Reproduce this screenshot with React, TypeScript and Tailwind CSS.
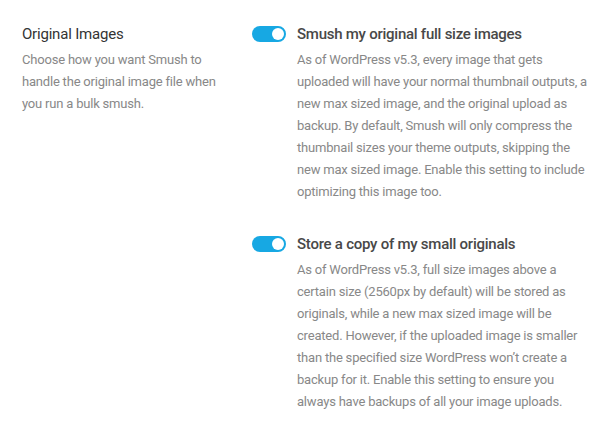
import React from "react";

function Toggle() {
  return (
    <div className="relative h-[16px] w-[34px] shrink-0 rounded-full bg-[#17a8e3]">
      <div className="absolute right-[2px] top-[2px] h-[12px] w-[12px] rounded-full bg-white" />
    </div>
  );
}

function Option({ title, desc }: { title: string; desc: string }) {
  return (
    <div className="flex flex-col">
      <div className="flex items-center gap-[11px]">
        <Toggle />
        <div className="text-[15px] leading-[22px] font-medium tracking-[-0.25px] text-[#484848]">{title}</div>
      </div>
      <p className="mt-[4px] ml-[45px] w-[293px] text-[13px] leading-[22px] tracking-[-0.2px] text-[#888888]">{desc}</p>
    </div>
  );
}

export default function App() {
  return (
    <div
      className="h-[429px] w-[610px] bg-white pl-[22px] pt-[23px]"
      style={{ fontFamily: "Roboto, 'Noto Sans', sans-serif" }}
    >
      <div className="flex">
        <div className="w-[230px] shrink-0">
          <div className="text-[15px] leading-[22px] tracking-[-0.2px] text-[#333333]">Original Images</div>
          <p className="mt-[4px] w-[200px] text-[13px] leading-[22px] tracking-[-0.2px] text-[#888888]">
            Choose how you want Smush to handle the original image file when you run a bulk smush.
          </p>
        </div>
        <div className="flex flex-col gap-[30px]">
          <Option
            title="Smush my original full size images"
            desc="As of WordPress v5.3, every image that gets uploaded will have your normal thumbnail outputs, a new max sized image, and the original upload as backup. By default, Smush will only compress the thumbnail sizes your theme outputs, skipping the new max sized image. Enable this setting to include optimizing this image too."
          />
          <Option
            title="Store a copy of my small originals"
            desc="As of WordPress v5.3, full size images above a certain size (2560px by default) will be stored as originals, while a new max sized image will be created. However, if the uploaded image is smaller than the specified size WordPress won’t create a backup for it. Enable this setting to ensure you always have backups of all your image uploads."
          />
        </div>
      </div>
    </div>
  );
}
